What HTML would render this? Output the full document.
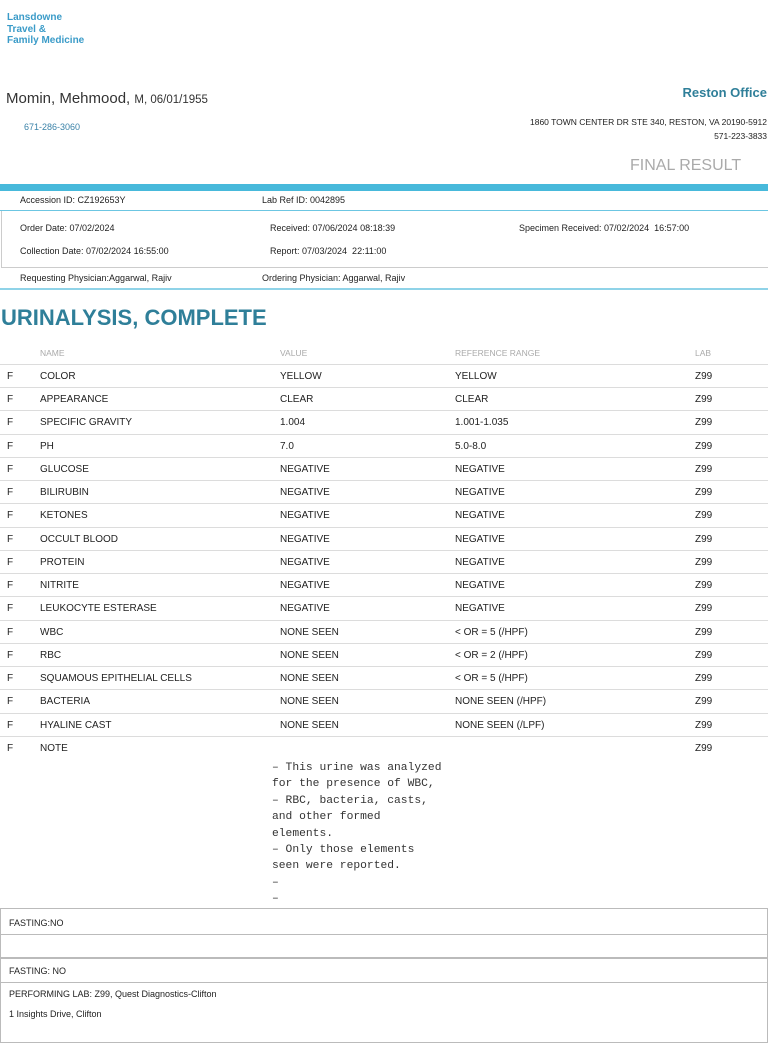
<!DOCTYPE html>
<html><head><meta charset="utf-8"><style>
body{margin:0;width:768px;height:1024px;overflow:hidden;background:#fff;font-family:"Liberation Sans",sans-serif;color:#222;position:relative}
.a{position:absolute;white-space:nowrap}
.logo{left:7px;top:12px;color:#3a9bc8;font-size:10px;line-height:11.7px;font-weight:bold}
.s{font-size:10px}
.row{position:absolute;left:0;width:768px;height:23px;font-size:10px}
.row span{position:absolute;top:7px}
.ln{position:absolute;left:0;width:768px;height:1px;background:#dcdcdc}
pre{position:absolute;left:272px;top:760px;margin:0;font-family:"Liberation Mono",monospace;font-size:11.3px;line-height:16.4px;color:#333}
.box{position:absolute;left:0;width:766px;border:1px solid #bbb;font-size:10px}
</style></head><body>
<div class="a logo">Lansdowne<br>Travel &amp;<br>Family Medicine</div>
<div class="a" style="left:6px;top:90px;font-size:15px;color:#333">Momin, Mehmood, <span style="font-size:11.5px">M, 06/01/1955</span></div>
<div class="a" style="left:24px;top:122px;font-size:9px;color:#3a82a8">671-286-3060</div>
<div class="a" style="right:1px;top:85px;font-size:13px;font-weight:bold;color:#2f7f99">Reston Office</div>
<div class="a" style="right:1px;top:117px;font-size:8.5px;color:#222">1860 TOWN CENTER DR STE 340, RESTON, VA 20190-5912</div>
<div class="a" style="right:1px;top:131px;font-size:8.5px;color:#222">571-223-3833</div>
<div class="a" style="left:630px;top:157px;font-size:16px;color:#aaa">FINAL RESULT</div>
<div class="a" style="left:0;top:184px;width:768px;height:7px;background:#47b9db"></div>
<div class="a" style="left:0;top:210px;width:768px;height:1px;background:#6cc6e2"></div>
<div class="a" style="left:1px;top:211px;width:766px;height:56px;border:1px solid #ccc;border-top:0;border-right-color:#ccc"></div>
<div class="a" style="left:0;top:288px;width:768px;height:2px;background:#8fd3e8"></div>
<div class="a s" style="left:20px;top:195px;font-size:9px">Accession ID: CZ192653Y</div>
<div class="a s" style="left:262px;top:195px;font-size:9px">Lab Ref ID: 0042895</div>
<div class="a s" style="left:20px;top:223px;font-size:9px">Order Date: 07/02/2024</div>
<div class="a s" style="left:270px;top:223px;font-size:9px">Received: 07/06/2024 08:18:39</div>
<div class="a s" style="left:519px;top:223px;font-size:9px">Specimen Received: 07/02/2024&nbsp; 16:57:00</div>
<div class="a s" style="left:20px;top:246px;font-size:9px">Collection Date: 07/02/2024 16:55:00</div>
<div class="a s" style="left:270px;top:246px;font-size:9px">Report: 07/03/2024&nbsp; 22:11:00</div>
<div class="a s" style="left:20px;top:273px;font-size:9px">Requesting Physician:Aggarwal, Rajiv</div>
<div class="a s" style="left:262px;top:273px;font-size:9px">Ordering Physician: Aggarwal, Rajiv</div>
<div class="a" style="left:1px;top:305px;font-size:22px;font-weight:bold;color:#2f7f99">URINALYSIS, COMPLETE</div>
<div class="row" style="top:341px;color:#aaa;font-size:8.5px"><span style="left:40px">NAME</span><span style="left:280px">VALUE</span><span style="left:455px">REFERENCE RANGE</span><span style="left:695px">LAB</span></div>
<div class="ln" style="top:364px"></div>
<div id="rows"></div>
<div class="row" style="top:364px"><span style="left:7px">F</span><span style="left:40px">COLOR</span><span style="left:280px">YELLOW</span><span style="left:455px">YELLOW</span><span style="left:695px">Z99</span></div><div class="ln" style="top:387px"></div>
<div class="row" style="top:387px"><span style="left:7px">F</span><span style="left:40px">APPEARANCE</span><span style="left:280px">CLEAR</span><span style="left:455px">CLEAR</span><span style="left:695px">Z99</span></div><div class="ln" style="top:410px"></div>
<div class="row" style="top:410px"><span style="left:7px">F</span><span style="left:40px">SPECIFIC GRAVITY</span><span style="left:280px">1.004</span><span style="left:455px">1.001-1.035</span><span style="left:695px">Z99</span></div><div class="ln" style="top:434px"></div>
<div class="row" style="top:434px"><span style="left:7px">F</span><span style="left:40px">PH</span><span style="left:280px">7.0</span><span style="left:455px">5.0-8.0</span><span style="left:695px">Z99</span></div><div class="ln" style="top:457px"></div>
<div class="row" style="top:457px"><span style="left:7px">F</span><span style="left:40px">GLUCOSE</span><span style="left:280px">NEGATIVE</span><span style="left:455px">NEGATIVE</span><span style="left:695px">Z99</span></div><div class="ln" style="top:480px"></div>
<div class="row" style="top:480px"><span style="left:7px">F</span><span style="left:40px">BILIRUBIN</span><span style="left:280px">NEGATIVE</span><span style="left:455px">NEGATIVE</span><span style="left:695px">Z99</span></div><div class="ln" style="top:503px"></div>
<div class="row" style="top:503px"><span style="left:7px">F</span><span style="left:40px">KETONES</span><span style="left:280px">NEGATIVE</span><span style="left:455px">NEGATIVE</span><span style="left:695px">Z99</span></div><div class="ln" style="top:527px"></div>
<div class="row" style="top:527px"><span style="left:7px">F</span><span style="left:40px">OCCULT BLOOD</span><span style="left:280px">NEGATIVE</span><span style="left:455px">NEGATIVE</span><span style="left:695px">Z99</span></div><div class="ln" style="top:550px"></div>
<div class="row" style="top:550px"><span style="left:7px">F</span><span style="left:40px">PROTEIN</span><span style="left:280px">NEGATIVE</span><span style="left:455px">NEGATIVE</span><span style="left:695px">Z99</span></div><div class="ln" style="top:573px"></div>
<div class="row" style="top:573px"><span style="left:7px">F</span><span style="left:40px">NITRITE</span><span style="left:280px">NEGATIVE</span><span style="left:455px">NEGATIVE</span><span style="left:695px">Z99</span></div><div class="ln" style="top:596px"></div>
<div class="row" style="top:596px"><span style="left:7px">F</span><span style="left:40px">LEUKOCYTE ESTERASE</span><span style="left:280px">NEGATIVE</span><span style="left:455px">NEGATIVE</span><span style="left:695px">Z99</span></div><div class="ln" style="top:620px"></div>
<div class="row" style="top:620px"><span style="left:7px">F</span><span style="left:40px">WBC</span><span style="left:280px">NONE SEEN</span><span style="left:455px">&lt; OR = 5 (/HPF)</span><span style="left:695px">Z99</span></div><div class="ln" style="top:643px"></div>
<div class="row" style="top:643px"><span style="left:7px">F</span><span style="left:40px">RBC</span><span style="left:280px">NONE SEEN</span><span style="left:455px">&lt; OR = 2 (/HPF)</span><span style="left:695px">Z99</span></div><div class="ln" style="top:666px"></div>
<div class="row" style="top:666px"><span style="left:7px">F</span><span style="left:40px">SQUAMOUS EPITHELIAL CELLS</span><span style="left:280px">NONE SEEN</span><span style="left:455px">&lt; OR = 5 (/HPF)</span><span style="left:695px">Z99</span></div><div class="ln" style="top:689px"></div>
<div class="row" style="top:689px"><span style="left:7px">F</span><span style="left:40px">BACTERIA</span><span style="left:280px">NONE SEEN</span><span style="left:455px">NONE SEEN (/HPF)</span><span style="left:695px">Z99</span></div><div class="ln" style="top:713px"></div>
<div class="row" style="top:713px"><span style="left:7px">F</span><span style="left:40px">HYALINE CAST</span><span style="left:280px">NONE SEEN</span><span style="left:455px">NONE SEEN (/LPF)</span><span style="left:695px">Z99</span></div><div class="ln" style="top:736px"></div>
<div class="row" style="top:736px"><span style="left:7px">F</span><span style="left:40px">NOTE</span><span style="left:695px">Z99</span></div>
<pre>– This urine was analyzed
for the presence of WBC,
– RBC, bacteria, casts,
and other formed
elements.
– Only those elements
seen were reported.
–
–</pre>
<div class="box" style="top:908px;height:25px"><span class="a" style="left:8px;top:9px;font-size:9px">FASTING:NO</span></div>
<div class="box" style="top:934px;height:23px;border-top:0"></div>
<div class="box" style="top:958px;height:23px"><span class="a" style="left:8px;top:7px;font-size:9px">FASTING: NO</span></div>
<div class="box" style="top:982px;height:60px;border-top:0"><span class="a" style="left:8px;top:7px;font-size:9px">PERFORMING LAB: Z99, Quest Diagnostics-Clifton</span><span class="a" style="left:8px;top:27px;font-size:9px">1 Insights Drive, Clifton</span></div>
</body></html>
